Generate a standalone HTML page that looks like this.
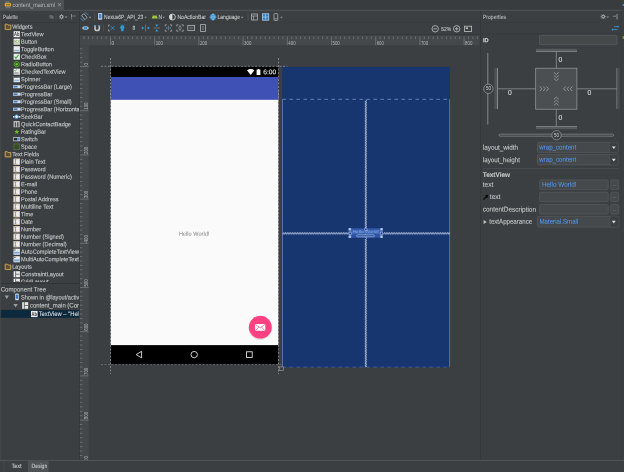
<!DOCTYPE html>
<html><head><meta charset="utf-8"><title>content_main.xml</title>
<style>
html,body{margin:0;padding:0;background:#3c3f41;}
body{width:624px;height:472px;position:relative;overflow:hidden;font-family:"Liberation Sans", sans-serif;color:#bbbbbb;font-size:5.8px;line-height:7.5px;}
.abs{position:absolute;}
.t{position:absolute;left:0;top:0;transform-origin:0 0;white-space:nowrap;-webkit-text-stroke:0.1px;line-height:8px;}
svg{position:absolute;left:0;top:0;overflow:visible;}
svg text{font-family:"Liberation Sans", sans-serif;}
</style></head><body><div id="root" style="position:absolute;left:0;top:0;width:624px;height:472px;will-change:transform;">

<svg width="624" height="472"><rect x="0.00" y="0.00" width="624.00" height="9.80" fill="#393c3e"/></svg>
<svg width="624" height="472"><rect x="0.00" y="0.00" width="63.90" height="10.20" fill="#4e5254"/></svg>
<svg width="624" height="472"><rect x="0.00" y="9.70" width="624.00" height="1.40" fill="#4b4f51"/></svg>
<svg width="624" height="472" viewBox="0 0 624 472">
<path d="M5.4 1.2 h3.4 l1.6 1.6 v5.4 h-5z" fill="#6e7274"/><rect x="4.8" y="3.2" width="6.1" height="3" fill="#eea732"/><rect x="6.2" y="4" width="1.3" height="1.5" fill="#7a5518"/><rect x="8.4" y="4" width="1.3" height="1.5" fill="#7a5518"/>
</svg>
<div class="t" style="transform:translate(12.60px,0.90px) rotate(0.05deg) scaleX(0.8697);font-size:6.21px;line-height:8px;color:#b8babc;-webkit-text-stroke:0;">content_main.xml</div>
<div class="t" style="transform:translate(57.60px,1.00px) rotate(0.05deg) scaleX(1.0000);font-size:6.96px;line-height:8px;color:#9a9da0;">&#215;</div>
<div class="t" style="transform:translate(2.90px,13.00px) rotate(0.05deg) scaleX(0.8094);font-size:5.99px;line-height:8px;color:#b6b8ba;">Palette</div>
<svg width="624" height="472"><rect x="0.00" y="22.20" width="79.50" height="0.60" fill="#323537"/></svg>
<svg width="624" height="472"><rect x="79.20" y="11.00" width="0.80" height="449.00" fill="#323537"/></svg>
<div class="abs" style="left:0;top:22.8px;width:79.2px;height:259.6px;overflow:hidden;">
<div class="t" style="transform:translate(12.2px,-0.30px) rotate(0.05deg) scaleX(0.935);color:#c8cacb;font-size:6.0px;">Widgets</div>
<div class="t" style="transform:translate(21.1px,7.20px) rotate(0.05deg) scaleX(0.935);color:#c8cacb;font-size:6.0px;">TextView</div>
<div class="t" style="transform:translate(21.1px,14.70px) rotate(0.05deg) scaleX(0.935);color:#c8cacb;font-size:6.0px;">Button</div>
<div class="t" style="transform:translate(21.1px,22.20px) rotate(0.05deg) scaleX(0.935);color:#c8cacb;font-size:6.0px;">ToggleButton</div>
<div class="t" style="transform:translate(21.1px,29.70px) rotate(0.05deg) scaleX(0.935);color:#c8cacb;font-size:6.0px;">CheckBox</div>
<div class="t" style="transform:translate(21.1px,37.20px) rotate(0.05deg) scaleX(0.935);color:#c8cacb;font-size:6.0px;">RadioButton</div>
<div class="t" style="transform:translate(21.1px,44.70px) rotate(0.05deg) scaleX(0.935);color:#c8cacb;font-size:6.0px;">CheckedTextView</div>
<div class="t" style="transform:translate(21.1px,52.20px) rotate(0.05deg) scaleX(0.935);color:#c8cacb;font-size:6.0px;">Spinner</div>
<div class="t" style="transform:translate(21.1px,59.70px) rotate(0.05deg) scaleX(0.935);color:#c8cacb;font-size:6.0px;">ProgressBar (Large)</div>
<div class="t" style="transform:translate(21.1px,67.20px) rotate(0.05deg) scaleX(0.935);color:#c8cacb;font-size:6.0px;">ProgressBar</div>
<div class="t" style="transform:translate(21.1px,74.70px) rotate(0.05deg) scaleX(0.935);color:#c8cacb;font-size:6.0px;">ProgressBar (Small)</div>
<div class="t" style="transform:translate(21.1px,82.20px) rotate(0.05deg) scaleX(0.935);color:#c8cacb;font-size:6.0px;">ProgressBar (Horizontal)</div>
<div class="t" style="transform:translate(21.1px,89.70px) rotate(0.05deg) scaleX(0.935);color:#c8cacb;font-size:6.0px;">SeekBar</div>
<div class="t" style="transform:translate(21.1px,97.20px) rotate(0.05deg) scaleX(0.935);color:#c8cacb;font-size:6.0px;">QuickContactBadge</div>
<div class="t" style="transform:translate(21.1px,104.70px) rotate(0.05deg) scaleX(0.935);color:#c8cacb;font-size:6.0px;">RatingBar</div>
<div class="t" style="transform:translate(21.1px,112.20px) rotate(0.05deg) scaleX(0.935);color:#c8cacb;font-size:6.0px;">Switch</div>
<div class="t" style="transform:translate(21.1px,119.70px) rotate(0.05deg) scaleX(0.935);color:#c8cacb;font-size:6.0px;">Space</div>
<div class="t" style="transform:translate(12.2px,127.20px) rotate(0.05deg) scaleX(0.935);color:#c8cacb;font-size:6.0px;">Text Fields</div>
<div class="t" style="transform:translate(21.1px,134.70px) rotate(0.05deg) scaleX(0.935);color:#c8cacb;font-size:6.0px;">Plain Text</div>
<div class="t" style="transform:translate(21.1px,142.20px) rotate(0.05deg) scaleX(0.935);color:#c8cacb;font-size:6.0px;">Password</div>
<div class="t" style="transform:translate(21.1px,149.70px) rotate(0.05deg) scaleX(0.935);color:#c8cacb;font-size:6.0px;">Password (Numeric)</div>
<div class="t" style="transform:translate(21.1px,157.20px) rotate(0.05deg) scaleX(0.935);color:#c8cacb;font-size:6.0px;">E-mail</div>
<div class="t" style="transform:translate(21.1px,164.70px) rotate(0.05deg) scaleX(0.935);color:#c8cacb;font-size:6.0px;">Phone</div>
<div class="t" style="transform:translate(21.1px,172.20px) rotate(0.05deg) scaleX(0.935);color:#c8cacb;font-size:6.0px;">Postal Address</div>
<div class="t" style="transform:translate(21.1px,179.70px) rotate(0.05deg) scaleX(0.935);color:#c8cacb;font-size:6.0px;">Multiline Text</div>
<div class="t" style="transform:translate(21.1px,187.20px) rotate(0.05deg) scaleX(0.935);color:#c8cacb;font-size:6.0px;">Time</div>
<div class="t" style="transform:translate(21.1px,194.70px) rotate(0.05deg) scaleX(0.935);color:#c8cacb;font-size:6.0px;">Date</div>
<div class="t" style="transform:translate(21.1px,202.20px) rotate(0.05deg) scaleX(0.935);color:#c8cacb;font-size:6.0px;">Number</div>
<div class="t" style="transform:translate(21.1px,209.70px) rotate(0.05deg) scaleX(0.935);color:#c8cacb;font-size:6.0px;">Number (Signed)</div>
<div class="t" style="transform:translate(21.1px,217.20px) rotate(0.05deg) scaleX(0.935);color:#c8cacb;font-size:6.0px;">Number (Decimal)</div>
<div class="t" style="transform:translate(21.1px,224.70px) rotate(0.05deg) scaleX(0.935);color:#c8cacb;font-size:6.0px;">AutoCompleteTextView</div>
<div class="t" style="transform:translate(21.1px,232.20px) rotate(0.05deg) scaleX(0.935);color:#c8cacb;font-size:6.0px;">MultiAutoCompleteTextView</div>
<div class="t" style="transform:translate(12.2px,239.70px) rotate(0.05deg) scaleX(0.935);color:#c8cacb;font-size:6.0px;">Layouts</div>
<div class="t" style="transform:translate(21.1px,247.20px) rotate(0.05deg) scaleX(0.935);color:#c8cacb;font-size:6.0px;">ConstraintLayout</div>
<div class="t" style="transform:translate(21.1px,254.70px) rotate(0.05deg) scaleX(0.935);color:#c8cacb;font-size:6.0px;">GridLayout</div>
<svg width="80" height="260" viewBox="0 0 80 260"><path d="M5.2 1.1999999999999993 h2.2 l0.6 0.9 h2.8 v4.3 h-5.6z" fill="#5a4e36" stroke="#cda552" stroke-width="1"/><rect x="13.6" y="8.2" width="6.3" height="6" fill="#ececec"/><text x="14.1" y="13.399999999999999" font-size="4.6" font-weight="bold" fill="#333" textLength="5.3" lengthAdjust="spacingAndGlyphs">Ab</text><rect x="13.6" y="15.7" width="6.3" height="6" fill="#ececec"/><rect x="14.2" y="17.0" width="5.1" height="3.4" fill="#8fb36a"/><text x="14.6" y="19.9" font-size="3" font-weight="bold" fill="#f4f4f4" textLength="4.3" lengthAdjust="spacingAndGlyphs">OK</text><rect x="13.6" y="23.2" width="6.3" height="6" fill="#ececec"/><rect x="14.1" y="26.8" width="5.3" height="1.6" fill="#8fb4dc"/><rect x="13.6" y="30.700000000000003" width="6.3" height="6" fill="#ececec"/><path d="M14.6 33.7 l1.4 1.6 l2.6 -3.6" stroke="#3aa33a" stroke-width="1.1" fill="none"/><circle cx="16.7" cy="41.2" r="2.6" fill="#2e4a22" stroke="#5fb32e" stroke-width="0.9"/><circle cx="16.7" cy="41.2" r="1.3" fill="#6cc43a"/><rect x="13.6" y="45.7" width="6.3" height="6" fill="#ececec"/><path d="M14.2 47.300000000000004 l1 1 l1.6 -2" stroke="#3aa33a" stroke-width="0.8" fill="none"/><rect x="14.2" y="49.5" width="4.4" height="1" fill="#777"/><rect x="13.6" y="53.2" width="6.3" height="6" fill="#ececec"/><rect x="13.6" y="53.1" width="6.4" height="1.6" fill="#3c3f41"/><rect x="14.2" y="56.6" width="5.1" height="1.6" fill="#9bbbe0"/><rect x="18.2" y="53.6" width="1.6" height="1.2" fill="#4a88c7"/><rect x="13.0" y="62.2" width="7.6" height="3" fill="#cfdbe8"/><rect x="13.5" y="62.900000000000006" width="4" height="1.6" fill="#3d7cc4"/><rect x="13.0" y="69.7" width="7.6" height="3" fill="#cfdbe8"/><rect x="13.5" y="70.4" width="4" height="1.6" fill="#3d7cc4"/><rect x="13.0" y="77.2" width="7.6" height="3" fill="#cfdbe8"/><rect x="13.5" y="77.9" width="4" height="1.6" fill="#3d7cc4"/><rect x="13.0" y="84.7" width="7.6" height="3" fill="#cfdbe8"/><rect x="13.5" y="85.4" width="4" height="1.6" fill="#3d7cc4"/><rect x="13.0" y="93.0" width="7.4" height="1.6" fill="#cfdbe8"/><circle cx="16.6" cy="93.7" r="1.9" fill="#e8eef5" stroke="#3d86d0" stroke-width="1"/><rect x="13.6" y="98.2" width="6" height="6" fill="#d8d8d8"/><rect x="14.6" y="99.2" width="1.6" height="4.6" fill="#555"/><rect x="17.0" y="99.2" width="1.6" height="4.6" fill="#555"/><polygon points="16.80,106.20 17.45,108.01 19.37,108.07 17.85,109.24 18.39,111.08 16.80,110.00 15.21,111.08 15.75,109.24 14.23,108.07 16.15,108.01" fill="#6cc030"/><rect x="13.2" y="114.2" width="7" height="4" fill="#d8dde2"/><rect x="13.799999999999999" y="114.9" width="3.6" height="2.6" fill="#2b2b2b"/><rect x="17.4" y="114.9" width="2.4" height="2.6" fill="#4a90d9"/><rect x="13.9" y="120.9" width="5.6" height="5.6" fill="#3a4a2c" stroke="#5f9a2a" stroke-width="0.7" stroke-dasharray="0.8 0.4"/><path d="M5.2 128.7 h2.2 l0.6 0.9 h2.8 v4.3 h-5.6z" fill="#5a4e36" stroke="#cda552" stroke-width="1"/><rect x="13.6" y="135.7" width="6.3" height="6" fill="#ececec"/><rect x="13.9" y="136.0" width="5.7" height="5.4" fill="none" stroke="#dcbf8e" stroke-width="0.6"/><path d="M14.7 136.7 h1.6 M15.5 136.7 v4 M14.7 140.7 h1.6" stroke="#3a7cc4" stroke-width="0.6" fill="none"/><rect x="13.6" y="143.2" width="6.3" height="6" fill="#ececec"/><rect x="13.9" y="143.5" width="5.7" height="5.4" fill="none" stroke="#dcbf8e" stroke-width="0.6"/><path d="M14.7 144.2 h1.6 M15.5 144.2 v4 M14.7 148.2 h1.6" stroke="#3a7cc4" stroke-width="0.6" fill="none"/><rect x="13.6" y="150.7" width="6.3" height="6" fill="#ececec"/><rect x="13.9" y="151.0" width="5.7" height="5.4" fill="none" stroke="#dcbf8e" stroke-width="0.6"/><path d="M14.7 151.7 h1.6 M15.5 151.7 v4 M14.7 155.7 h1.6" stroke="#3a7cc4" stroke-width="0.6" fill="none"/><rect x="13.6" y="158.2" width="6.3" height="6" fill="#ececec"/><rect x="13.9" y="158.5" width="5.7" height="5.4" fill="none" stroke="#dcbf8e" stroke-width="0.6"/><path d="M14.7 159.2 h1.6 M15.5 159.2 v4 M14.7 163.2 h1.6" stroke="#3a7cc4" stroke-width="0.6" fill="none"/><rect x="13.6" y="165.7" width="6.3" height="6" fill="#ececec"/><rect x="13.9" y="166.0" width="5.7" height="5.4" fill="none" stroke="#dcbf8e" stroke-width="0.6"/><path d="M14.7 166.7 h1.6 M15.5 166.7 v4 M14.7 170.7 h1.6" stroke="#3a7cc4" stroke-width="0.6" fill="none"/><rect x="13.6" y="173.2" width="6.3" height="6" fill="#ececec"/><rect x="13.9" y="173.5" width="5.7" height="5.4" fill="none" stroke="#dcbf8e" stroke-width="0.6"/><path d="M14.7 174.2 h1.6 M15.5 174.2 v4 M14.7 178.2 h1.6" stroke="#3a7cc4" stroke-width="0.6" fill="none"/><rect x="13.6" y="180.7" width="6.3" height="6" fill="#ececec"/><rect x="13.9" y="181.0" width="5.7" height="5.4" fill="none" stroke="#dcbf8e" stroke-width="0.6"/><path d="M14.7 181.7 h1.6 M15.5 181.7 v4 M14.7 185.7 h1.6" stroke="#3a7cc4" stroke-width="0.6" fill="none"/><rect x="13.6" y="188.2" width="6.3" height="6" fill="#ececec"/><rect x="13.9" y="188.5" width="5.7" height="5.4" fill="none" stroke="#dcbf8e" stroke-width="0.6"/><path d="M14.7 189.2 h1.6 M15.5 189.2 v4 M14.7 193.2 h1.6" stroke="#3a7cc4" stroke-width="0.6" fill="none"/><rect x="13.6" y="195.7" width="6.3" height="6" fill="#ececec"/><rect x="13.9" y="196.0" width="5.7" height="5.4" fill="none" stroke="#dcbf8e" stroke-width="0.6"/><path d="M14.7 196.7 h1.6 M15.5 196.7 v4 M14.7 200.7 h1.6" stroke="#3a7cc4" stroke-width="0.6" fill="none"/><rect x="13.6" y="203.2" width="6.3" height="6" fill="#ececec"/><rect x="13.9" y="203.5" width="5.7" height="5.4" fill="none" stroke="#dcbf8e" stroke-width="0.6"/><path d="M14.7 204.2 h1.6 M15.5 204.2 v4 M14.7 208.2 h1.6" stroke="#3a7cc4" stroke-width="0.6" fill="none"/><rect x="13.6" y="210.7" width="6.3" height="6" fill="#ececec"/><rect x="13.9" y="211.0" width="5.7" height="5.4" fill="none" stroke="#dcbf8e" stroke-width="0.6"/><path d="M14.7 211.7 h1.6 M15.5 211.7 v4 M14.7 215.7 h1.6" stroke="#3a7cc4" stroke-width="0.6" fill="none"/><rect x="13.6" y="218.2" width="6.3" height="6" fill="#ececec"/><rect x="13.9" y="218.5" width="5.7" height="5.4" fill="none" stroke="#dcbf8e" stroke-width="0.6"/><path d="M14.7 219.2 h1.6 M15.5 219.2 v4 M14.7 223.2 h1.6" stroke="#3a7cc4" stroke-width="0.6" fill="none"/><rect x="13.6" y="225.7" width="6.3" height="6" fill="#ececec"/><rect x="13.6" y="228.5" width="6.3" height="3.2" fill="#aac8e8"/><rect x="14.2" y="226.29999999999998" width="1.4" height="1.2" fill="#555"/><rect x="14.2" y="229.29999999999998" width="5" height="0.7" fill="#6b94c4"/><rect x="13.6" y="233.2" width="6.3" height="6" fill="#ececec"/><rect x="13.6" y="236.0" width="6.3" height="3.2" fill="#aac8e8"/><rect x="14.2" y="233.79999999999998" width="1.4" height="1.2" fill="#555"/><rect x="14.2" y="236.79999999999998" width="5" height="0.7" fill="#6b94c4"/><path d="M5.2 241.2 h2.2 l0.6 0.9 h2.8 v4.3 h-5.6z" fill="#5a4e36" stroke="#cda552" stroke-width="1"/><rect x="13.6" y="248.2" width="6.3" height="6" fill="#ececec"/><path d="M15.6 248.2 v6 M15.6 251.2 h3.8" stroke="#444" stroke-width="0.7" fill="none"/><rect x="13.6" y="255.7" width="6.3" height="6" fill="#ececec"/><path d="M15.6 255.7 v6 M15.6 258.7 h3.8" stroke="#444" stroke-width="0.7" fill="none"/></svg>
</div>
<svg width="624" height="472"><rect x="0.00" y="283.20" width="79.20" height="0.70" fill="#2f3234"/></svg>
<div class="t" style="transform:translate(0.70px,285.50px) rotate(0.05deg) scaleX(0.9358);font-size:6.53px;line-height:8px;color:#c4c6c7;">Component Tree</div>
<svg width="624" height="472"><rect x="0.00" y="309.90" width="79.20" height="7.90" fill="#0d293e"/></svg>
<div class="abs" style="left:0;top:284px;width:79.2px;height:40px;overflow:hidden;">
<div class="t" style="transform:translate(20.9px,9.50px) rotate(0.05deg) scaleX(0.8631);font-size:6.5px;color:#c8cacb;">Shown in @layout/activity_main</div>
<div class="t" style="transform:translate(29.9px,17.50px) rotate(0.05deg) scaleX(0.9177);font-size:6.5px;color:#c8cacb;">content_main (ConstraintLayout)</div>
<div class="t" style="transform:translate(38.7px,25.90px) rotate(0.05deg) scaleX(0.8898);font-size:6.5px;color:#dcdedf;">TextView &#8211; "Hello World!"</div>
</div>
<svg width="624" height="472" viewBox="0 0 624 472">
<path d="M4.6 295.6 h4.4 l-2.2 3.4z" fill="#9da0a2"/>
<path d="M13.4 303.9 h4.4 l-2.2 3.4z" fill="#9da0a2"/>
<rect x="15.2" y="293.6" width="3.6" height="6.6" rx="0.6" fill="#cfd6dd"/><rect x="15.9" y="294.6" width="2.2" height="4.2" fill="#3d7cc4"/>
<rect x="22.2" y="302.2" width="6" height="6.6" fill="#e6e6e6"/><path d="M24.4 302.2 v6.6 M24.4 305.5 h3.8" stroke="#444" stroke-width="0.7"/>
<rect x="31" y="310.9" width="6.6" height="6.2" fill="#ececec"/><text x="31.6" y="316.2" font-size="4.7" font-weight="bold" fill="#333" textLength="5.4" lengthAdjust="spacingAndGlyphs">Ab</text>
</svg>
<svg width="624" height="472"><rect x="80.00" y="22.20" width="400.50" height="0.50" fill="#37393b"/></svg>
<svg width="624" height="472"><rect x="80.00" y="34.30" width="400.50" height="0.60" fill="#323537"/></svg>
<div class="t" style="transform:translate(104.10px,13.00px) rotate(0.05deg) scaleX(0.8287);font-size:5.99px;line-height:8px;color:#c4c6c7;">Nexus6P_API_23</div>
<div class="t" style="transform:translate(158.60px,13.00px) rotate(0.05deg) scaleX(0.8318);font-size:5.99px;line-height:8px;color:#c4c6c7;">N</div>
<div class="t" style="transform:translate(177.40px,13.00px) rotate(0.05deg) scaleX(0.8502);font-size:5.99px;line-height:8px;color:#c4c6c7;">NoActionBar</div>
<div class="t" style="transform:translate(217.50px,13.00px) rotate(0.05deg) scaleX(0.8439);font-size:5.99px;line-height:8px;color:#c4c6c7;">Language</div>
<div class="t" style="transform:translate(132.40px,24.00px) rotate(0.05deg) scaleX(0.8318);font-size:5.99px;line-height:8px;color:#c4c6c7;">8</div>
<div class="t" style="transform:translate(441.20px,24.90px) rotate(0.05deg) scaleX(0.8647);font-size:5.78px;line-height:8px;color:#c4c6c7;">52%</div>
<svg width="624" height="472" viewBox="0 0 624 472">
<rect x="49.3" y="14.9" width="3.4" height="2.8" fill="#5d6062"/><rect x="50.3" y="15.9" width="3.4" height="2.8" fill="#66696b"/>
<path d="M56 13.8 V19.8" stroke="#55585a" stroke-width="0.6"/>
<circle cx="61.5" cy="16.8" r="1.4000000000000001" fill="none" stroke="#a3a6a8" stroke-width="1.1"/>
<path d="M63.20 16.80 L64.10 16.80 M62.70 18.00 L63.34 18.64 M61.50 18.50 L61.50 19.40 M60.30 18.00 L59.66 18.64 M59.80 16.80 L58.90 16.80 M60.30 15.60 L59.66 14.96 M61.50 15.10 L61.50 14.20 M62.70 15.60 L63.34 14.96" stroke="#a3a6a8" stroke-width="0.8"/>
<path d="M64.9 16.599999999999998 h2.6 l-1.3 1.6z" fill="#8c8f91"/>
<path d="M71.6 14 V17.6 M71.6 18.3 V19.2" stroke="#a3a6a8" stroke-width="0.8"/><path d="M72.6 16 h3.2" stroke="#8a8d8f" stroke-width="0.7"/>
<circle cx="603.2" cy="16.6" r="1.4000000000000001" fill="none" stroke="#a3a6a8" stroke-width="1.1"/>
<path d="M604.90 16.60 L605.80 16.60 M604.40 17.80 L605.04 18.44 M603.20 18.30 L603.20 19.20 M602.00 17.80 L601.36 18.44 M601.50 16.60 L600.60 16.60 M602.00 15.40 L601.36 14.76 M603.20 14.90 L603.20 14.00 M604.40 15.40 L605.04 14.76" stroke="#a3a6a8" stroke-width="0.8"/>
<path d="M606.5 16.4 h2.6 l-1.3 1.6z" fill="#8c8f91"/>
<path d="M617 14 V19.4" stroke="#a3a6a8" stroke-width="0.8"/><path d="M612.8 16.2 h3.4" stroke="#a3a6a8" stroke-width="0.7"/>
<path d="M612.4 29.6 h5 M614 26.6 h4.2" stroke="#3592c4" stroke-width="0.9"/><path d="M617.6 25.2 l1.6 1.4 l-1.6 1.4z M613 28.2 l-1.6 1.4 l1.6 1.4z" fill="#3592c4"/>
<g transform="rotate(-38 84.4 16.6)"><rect x="82.8" y="14" width="3.2" height="5.2" rx="0.6" fill="none" stroke="#aeb1b3" stroke-width="0.75"/></g><path d="M84.6 12.6 a4 4 0 0 1 3.6 2.6 M84.2 20.6 a4 4 0 0 1 -3.6 -2.6" stroke="#3592c4" stroke-width="0.8" fill="none"/>
<path d="M88.7 16.799999999999997 h2.6 l-1.3 1.6z" fill="#8c8f91"/>
<path d="M94.4 13.4 V20.8" stroke="#55585a" stroke-width="0.6"/>
<rect x="98" y="13" width="4.2" height="6.8" rx="0.7" fill="#bdd3ea"/><rect x="98.8" y="14" width="2.6" height="4.4" fill="#4f86c6"/>
<path d="M144.29999999999998 16.799999999999997 h2.6 l-1.3 1.6z" fill="#8c8f91"/>
<path d="M151.8 18.4 a2.9 2.9 0 0 1 5.8 0z" fill="#9bc53d"/><path d="M152.6 14.6 l0.9 1.3 M156.8 14.6 l-0.9 1.3" stroke="#9bc53d" stroke-width="0.6"/>
<path d="M162.29999999999998 16.799999999999997 h2.6 l-1.3 1.6z" fill="#8c8f91"/>
<circle cx="172.4" cy="17" r="3" fill="none" stroke="#d8dadb" stroke-width="0.8"/><path d="M172.4 14 a3 3 0 0 0 0 6z" fill="#d8dadb"/>
<circle cx="213" cy="17" r="3.3" fill="#2b83c4"/><path d="M209.7 17 h6.6 M213 13.7 v6.6 M213 13.7 a4.6 4.6 0 0 0 0 6.6 M213 13.7 a4.6 4.6 0 0 1 0 6.6" stroke="#a8d4f0" stroke-width="0.5" fill="none"/>
<path d="M240.89999999999998 16.799999999999997 h2.6 l-1.3 1.6z" fill="#8c8f91"/>
<path d="M248 13.4 V20.8" stroke="#55585a" stroke-width="0.6"/>
<rect x="251.6" y="14" width="5.8" height="6" fill="none" stroke="#aeb1b3" stroke-width="0.8"/><path d="M251.6 16 h5.8 M253.6 16 v4" stroke="#aeb1b3" stroke-width="0.7"/>
<rect x="262.4" y="13.8" width="6.4" height="6.4" fill="#2f7fc0" stroke="#bcd8ee" stroke-width="0.7"/><path d="M262.4 17 h6.4 M265.6 13.8 v6.4" stroke="#bcd8ee" stroke-width="0.6"/>
<rect x="274" y="13.6" width="3.8" height="6.8" rx="0.7" fill="none" stroke="#aeb1b3" stroke-width="0.8"/><path d="M274 18.8 h3.8" stroke="#aeb1b3" stroke-width="0.6"/>
<path d="M280.09999999999997 16.799999999999997 h2.6 l-1.3 1.6z" fill="#8c8f91"/>
<path d="M81.8 28 q3.7 -4.2 7.4 0 q-3.7 4.2 -7.4 0z" fill="#c4c7c9"/><ellipse cx="85.5" cy="28" rx="1.9" ry="1.4" fill="#2f8fd0"/>
<path d="M95 25 v3.4 a2.15 2.15 0 0 0 4.3 0 v-3.4" fill="none" stroke="#c4c7c9" stroke-width="1.6"/><path d="M94.2 25.6 h1.6 M98.5 25.6 h1.6" stroke="#2f8fd0" stroke-width="1.4"/>
<path d="M103.4 24.4 V31.6" stroke="#55585a" stroke-width="0.6"/>
<path d="M110 25 h-1.6 v1.7 M108.4 29.3 v1.7 h1.6" fill="none" stroke="#aeb1b3" stroke-width="0.7"/><path d="M110.8 26.2 l3.6 3.6 M114.4 26.2 l-3.6 3.6" stroke="#2f9ad8" stroke-width="0.9"/>
<path d="M120.2 27.4 a2.1 2.1 0 1 1 4.2 0 q0 1.2 -0.9 2 v1.8 h-2.4 v-1.8 q-0.9 -0.8 -0.9 -2z" fill="#2f9ad8"/><path d="M122.3 24 v0.8 M120.2 24.6 l0.5 0.6 M124.4 24.6 l-0.5 0.6" stroke="#2f9ad8" stroke-width="0.5"/>
<path d="M145.5 24.6 v6.8" stroke="#9a9d9f" stroke-width="0.5"/><path d="M141.8 26.5 l2.6 1.5 l-2.6 1.5z M149.2 26.5 l-2.6 1.5 l2.6 1.5z" fill="#2f9ad8"/>
<path d="M153.4 28 h6.8" stroke="#9a9d9f" stroke-width="0.5"/><path d="M155.3 24.4 l1.5 2.6 l1.5 -2.6z M155.3 31.6 l1.5 -2.6 l1.5 2.6z" fill="#2f9ad8"/>
<path d="M165.2 26.400000000000002 v-1.6 h1.6 M170.0 24.8 h1.6 v1.6 M171.6 29.6 v1.6 h-1.6 M166.79999999999998 31.200000000000003 h-1.6 v-1.6" stroke="#b4b7b9" stroke-width="0.7" fill="none"/>
<path d="M168.4 25.8 v4.4" stroke="#b4b7b9" stroke-width="0.5"/><path d="M166 26.9 l1.7 1.1 l-1.7 1.1z M170.8 26.9 l-1.7 1.1 l1.7 1.1z" fill="#2f9ad8"/>
<path d="M176.8 26.400000000000002 v-1.6 h1.6 M181.60000000000002 24.8 h1.6 v1.6 M183.20000000000002 29.6 v1.6 h-1.6 M178.4 31.200000000000003 h-1.6 v-1.6" stroke="#b4b7b9" stroke-width="0.7" fill="none"/>
<path d="M177.9 28 h4.2" stroke="#b4b7b9" stroke-width="0.5"/><path d="M178.9 25.7 l1.1 1.6 l1.1 -1.6z M178.9 30.3 l1.1 -1.6 l1.1 1.6z" fill="#b4b7b9"/>
<rect x="187.8" y="25.5" width="6.8" height="5" fill="none" stroke="#b4b7b9" stroke-width="0.8"/><path d="M189.2 28 h4" stroke="#b4b7b9" stroke-width="0.6"/>
<rect x="200.6" y="24.6" width="4.8" height="6.8" fill="none" stroke="#b4b7b9" stroke-width="0.8"/><path d="M203 26 v4" stroke="#b4b7b9" stroke-width="0.6"/>
<circle cx="435.2" cy="28.8" r="3.2" fill="none" stroke="#c0c2c4" stroke-width="0.8"/><path d="M433.5 28.8 h3.4" stroke="#c0c2c4" stroke-width="0.8"/>
<circle cx="456.7" cy="28.8" r="3.2" fill="none" stroke="#c0c2c4" stroke-width="0.8"/><path d="M455 28.8 h3.4 M456.7 27.1 v3.4" stroke="#c0c2c4" stroke-width="0.8"/>
<rect x="464.4" y="26.2" width="7.2" height="5.2" fill="none" stroke="#c0c2c4" stroke-width="0.8"/><rect x="465.8" y="27.4" width="2.2" height="1.6" fill="#c0c2c4"/>
</svg>
<svg width="624" height="472"><rect x="80.00" y="35.50" width="399.60" height="9.70" fill="#45484a"/></svg>
<svg width="624" height="472"><rect x="80.00" y="45.30" width="8.60" height="414.50" fill="#45484a"/></svg>
<svg width="624" height="472" viewBox="0 0 624 472">
<path d="M83.98 36.5 V39.2 M88.40 36.5 V39.2 M92.82 36.5 V39.2 M97.24 36.5 V39.2 M101.66 36.5 V39.2 M106.08 36.5 V39.2 M110.50 36.5 V45.3 M114.92 36.5 V39.2 M119.34 36.5 V39.2 M123.76 36.5 V39.2 M128.18 36.5 V39.2 M132.60 36.5 V39.2 M137.02 36.5 V39.2 M141.44 36.5 V39.2 M145.86 36.5 V39.2 M150.28 36.5 V39.2 M154.70 36.5 V45.3 M159.12 36.5 V39.2 M163.54 36.5 V39.2 M167.96 36.5 V39.2 M172.38 36.5 V39.2 M176.80 36.5 V39.2 M181.22 36.5 V39.2 M185.64 36.5 V39.2 M190.06 36.5 V39.2 M194.48 36.5 V39.2 M198.90 36.5 V45.3 M203.32 36.5 V39.2 M207.74 36.5 V39.2 M212.16 36.5 V39.2 M216.58 36.5 V39.2 M221.00 36.5 V39.2 M225.42 36.5 V39.2 M229.84 36.5 V39.2 M234.26 36.5 V39.2 M238.68 36.5 V39.2 M243.10 36.5 V45.3 M247.52 36.5 V39.2 M251.94 36.5 V39.2 M256.36 36.5 V39.2 M260.78 36.5 V39.2 M265.20 36.5 V39.2 M269.62 36.5 V39.2 M274.04 36.5 V39.2 M278.46 36.5 V39.2 M282.88 36.5 V39.2 M287.30 36.5 V45.3 M291.72 36.5 V39.2 M296.14 36.5 V39.2 M300.56 36.5 V39.2 M304.98 36.5 V39.2 M309.40 36.5 V39.2 M313.82 36.5 V39.2 M318.24 36.5 V39.2 M322.66 36.5 V39.2 M327.08 36.5 V39.2 M331.50 36.5 V45.3 M335.92 36.5 V39.2 M340.34 36.5 V39.2 M344.76 36.5 V39.2 M349.18 36.5 V39.2 M353.60 36.5 V39.2 M358.02 36.5 V39.2 M362.44 36.5 V39.2 M366.86 36.5 V39.2 M371.28 36.5 V39.2 M375.70 36.5 V45.3 M380.12 36.5 V39.2 M384.54 36.5 V39.2 M388.96 36.5 V39.2 M393.38 36.5 V39.2 M397.80 36.5 V39.2 M402.22 36.5 V39.2 M406.64 36.5 V39.2 M411.06 36.5 V39.2 M415.48 36.5 V39.2 M419.90 36.5 V45.3 M424.32 36.5 V39.2 M428.74 36.5 V39.2 M433.16 36.5 V39.2 M437.58 36.5 V39.2 M442.00 36.5 V39.2 M446.42 36.5 V39.2 M450.84 36.5 V39.2 M455.26 36.5 V39.2 M459.68 36.5 V39.2 M464.10 36.5 V45.3 M468.52 36.5 V39.2 M472.94 36.5 V39.2 M477.36 36.5 V39.2" stroke="#85888a" stroke-width="0.6" fill="none"/>
<text x="111.50" y="44.7" font-size="4.9" fill="#b4b7b9">0</text>
<text x="155.70" y="44.7" font-size="4.9" fill="#b4b7b9" textLength="7.3" lengthAdjust="spacingAndGlyphs">100</text>
<text x="199.90" y="44.7" font-size="4.9" fill="#b4b7b9" textLength="7.3" lengthAdjust="spacingAndGlyphs">200</text>
<text x="244.10" y="44.7" font-size="4.9" fill="#b4b7b9" textLength="7.3" lengthAdjust="spacingAndGlyphs">300</text>
<text x="288.30" y="44.7" font-size="4.9" fill="#b4b7b9" textLength="7.3" lengthAdjust="spacingAndGlyphs">400</text>
<text x="332.50" y="44.7" font-size="4.9" fill="#b4b7b9" textLength="7.3" lengthAdjust="spacingAndGlyphs">500</text>
<text x="376.70" y="44.7" font-size="4.9" fill="#b4b7b9" textLength="7.3" lengthAdjust="spacingAndGlyphs">600</text>
<text x="420.90" y="44.7" font-size="4.9" fill="#b4b7b9" textLength="7.3" lengthAdjust="spacingAndGlyphs">700</text>
<text x="465.10" y="44.7" font-size="4.9" fill="#b4b7b9" textLength="7.3" lengthAdjust="spacingAndGlyphs">800</text>
<path d="M79.8 48.82 H82.4 M79.8 53.24 H82.4 M79.8 57.66 H82.4 M79.8 62.08 H82.4 M80 66.50 H88.6 M79.8 70.92 H82.4 M79.8 75.34 H82.4 M79.8 79.76 H82.4 M79.8 84.18 H82.4 M79.8 88.60 H82.4 M79.8 93.02 H82.4 M79.8 97.44 H82.4 M79.8 101.86 H82.4 M79.8 106.28 H82.4 M80 110.70 H88.6 M79.8 115.12 H82.4 M79.8 119.54 H82.4 M79.8 123.96 H82.4 M79.8 128.38 H82.4 M79.8 132.80 H82.4 M79.8 137.22 H82.4 M79.8 141.64 H82.4 M79.8 146.06 H82.4 M79.8 150.48 H82.4 M80 154.90 H88.6 M79.8 159.32 H82.4 M79.8 163.74 H82.4 M79.8 168.16 H82.4 M79.8 172.58 H82.4 M79.8 177.00 H82.4 M79.8 181.42 H82.4 M79.8 185.84 H82.4 M79.8 190.26 H82.4 M79.8 194.68 H82.4 M80 199.10 H88.6 M79.8 203.52 H82.4 M79.8 207.94 H82.4 M79.8 212.36 H82.4 M79.8 216.78 H82.4 M79.8 221.20 H82.4 M79.8 225.62 H82.4 M79.8 230.04 H82.4 M79.8 234.46 H82.4 M79.8 238.88 H82.4 M80 243.30 H88.6 M79.8 247.72 H82.4 M79.8 252.14 H82.4 M79.8 256.56 H82.4 M79.8 260.98 H82.4 M79.8 265.40 H82.4 M79.8 269.82 H82.4 M79.8 274.24 H82.4 M79.8 278.66 H82.4 M79.8 283.08 H82.4 M80 287.50 H88.6 M79.8 291.92 H82.4 M79.8 296.34 H82.4 M79.8 300.76 H82.4 M79.8 305.18 H82.4 M79.8 309.60 H82.4 M79.8 314.02 H82.4 M79.8 318.44 H82.4 M79.8 322.86 H82.4 M79.8 327.28 H82.4 M80 331.70 H88.6 M79.8 336.12 H82.4 M79.8 340.54 H82.4 M79.8 344.96 H82.4 M79.8 349.38 H82.4 M79.8 353.80 H82.4 M79.8 358.22 H82.4 M79.8 362.64 H82.4 M79.8 367.06 H82.4 M79.8 371.48 H82.4 M80 375.90 H88.6 M79.8 380.32 H82.4 M79.8 384.74 H82.4 M79.8 389.16 H82.4 M79.8 393.58 H82.4 M79.8 398.00 H82.4 M79.8 402.42 H82.4 M79.8 406.84 H82.4 M79.8 411.26 H82.4 M79.8 415.68 H82.4 M80 420.10 H88.6 M79.8 424.52 H82.4 M79.8 428.94 H82.4 M79.8 433.36 H82.4 M79.8 437.78 H82.4 M79.8 442.20 H82.4 M79.8 446.62 H82.4 M79.8 451.04 H82.4 M79.8 455.46 H82.4" stroke="#85888a" stroke-width="0.6" fill="none"/>
<text transform="translate(88.1 65.60) rotate(-90)" font-size="4.9" fill="#b4b7b9">0</text>
<text transform="translate(88.1 109.80) rotate(-90)" font-size="4.9" fill="#b4b7b9" textLength="7.3" lengthAdjust="spacingAndGlyphs">100</text>
<text transform="translate(88.1 154.00) rotate(-90)" font-size="4.9" fill="#b4b7b9" textLength="7.3" lengthAdjust="spacingAndGlyphs">200</text>
<text transform="translate(88.1 198.20) rotate(-90)" font-size="4.9" fill="#b4b7b9" textLength="7.3" lengthAdjust="spacingAndGlyphs">300</text>
<text transform="translate(88.1 242.40) rotate(-90)" font-size="4.9" fill="#b4b7b9" textLength="7.3" lengthAdjust="spacingAndGlyphs">400</text>
<text transform="translate(88.1 286.60) rotate(-90)" font-size="4.9" fill="#b4b7b9" textLength="7.3" lengthAdjust="spacingAndGlyphs">500</text>
<text transform="translate(88.1 330.80) rotate(-90)" font-size="4.9" fill="#b4b7b9" textLength="7.3" lengthAdjust="spacingAndGlyphs">600</text>
<text transform="translate(88.1 375.00) rotate(-90)" font-size="4.9" fill="#b4b7b9" textLength="7.3" lengthAdjust="spacingAndGlyphs">700</text>
<text transform="translate(88.1 419.20) rotate(-90)" font-size="4.9" fill="#b4b7b9" textLength="7.3" lengthAdjust="spacingAndGlyphs">800</text>
<text transform="translate(88.1 463.40) rotate(-90)" font-size="4.9" fill="#b4b7b9" textLength="7.3" lengthAdjust="spacingAndGlyphs">900</text>
</svg>
<svg width="624" height="472"><rect x="110.80" y="66.60" width="167.50" height="297.70" fill="#000"/></svg>
<svg width="624" height="472"><rect x="110.80" y="90.00" width="167.50" height="255.10" fill="#fafafa"/></svg>
<svg width="624" height="472"><rect x="110.80" y="77.00" width="167.50" height="22.80" fill="#3f51b5"/></svg>
<div class="t" style="transform:translate(178.90px,229.80px) rotate(0.05deg) scaleX(0.9725);font-size:5.78px;line-height:8px;color:#7c7c7c;-webkit-text-stroke:0;">Hello World!</div>
<div class="t" style="transform:translate(263.20px,68.20px) rotate(0.05deg) scaleX(0.9908);font-size:6.74px;line-height:8px;color:#ececec;">6:00</div>
<svg width="624" height="472"><rect x="282.20" y="66.80" width="167.80" height="300.50" fill="#17366f"/></svg>
<svg width="624" height="472" viewBox="0 0 624 472">
<circle cx="260.3" cy="328.2" r="11.8" fill="#000" opacity="0.10"/>
<circle cx="260.3" cy="327.2" r="11.4" fill="#ff4081"/>
<rect x="255.1" y="324.0" width="10.2" height="6.8" rx="0.7" fill="#fff"/><path d="M255.4 324.4 l4.8 3.4 l4.8 -3.4 M255.5 330.5 l3.3 -3.4 M264.9 330.5 l-3.3 -3.4" stroke="#ff4081" stroke-width="0.7" fill="none"/>
<path d="M141.6 351.3 v6.6 l-5.4 -3.3z" fill="none" stroke="#fff" stroke-width="0.8"/>
<circle cx="194.2" cy="354.6" r="3.2" fill="none" stroke="#fff" stroke-width="0.8"/>
<rect x="246.6" y="351.8" width="5.6" height="5.6" fill="none" stroke="#fff" stroke-width="0.8"/>
<path d="M247 70.2 q3.7 -2.6 7.4 0 l-3.7 4.8z" fill="#fff"/>
<rect x="256.6" y="69.6" width="3.8" height="5.4" fill="#fff"/><rect x="257.7" y="68.9" width="1.6" height="1" fill="#fff"/>
<g stroke="#b4b6b8" stroke-width="0.55" stroke-dasharray="2 1.5" fill="none">
<path d="M101 66.3 H287.4 M110.5 58 V374 M278.5 58 V374"/><path d="M101 364.6 H282" stroke="#8e9092"/>
</g>
<path d="M282.4 99.3 H450" stroke="#7f9bd0" stroke-width="0.7" stroke-dasharray="3.6 3.4"/>
<path d="M282.5 99.3 V367.3" stroke="#6c8cc8" stroke-width="0.7"/>
<path d="M449.6 99.3 V367.3" stroke="#6c8cc8" stroke-width="0.7"/>
<path d="M282.4 367.1 H450" stroke="#5877b4" stroke-width="0.6" stroke-dasharray="3.6 3.4"/>
<rect x="279.2" y="366.9" width="4.2" height="3.4" fill="#3c3f41" stroke="#a6a8aa" stroke-width="0.6"/>
<path d="M365.8 99.8 L366.75 100.65 L364.85 101.50 L366.75 102.35 L364.85 103.20 L366.75 104.05 L364.85 104.90 L366.75 105.75 L364.85 106.60 L366.75 107.45 L364.85 108.30 L366.75 109.15 L364.85 110.00 L366.75 110.85 L364.85 111.70 L366.75 112.55 L364.85 113.40 L366.75 114.25 L364.85 115.10 L366.75 115.95 L364.85 116.80 L366.75 117.65 L364.85 118.50 L366.75 119.35 L364.85 120.20 L366.75 121.05 L364.85 121.90 L366.75 122.75 L364.85 123.60 L366.75 124.45 L364.85 125.30 L366.75 126.15 L364.85 127.00 L366.75 127.85 L364.85 128.70 L366.75 129.55 L364.85 130.40 L366.75 131.25 L364.85 132.10 L366.75 132.95 L364.85 133.80 L366.75 134.65 L364.85 135.50 L366.75 136.35 L364.85 137.20 L366.75 138.05 L364.85 138.90 L366.75 139.75 L364.85 140.60 L366.75 141.45 L364.85 142.30 L366.75 143.15 L364.85 144.00 L366.75 144.85 L364.85 145.70 L366.75 146.55 L364.85 147.40 L366.75 148.25 L364.85 149.10 L366.75 149.95 L364.85 150.80 L366.75 151.65 L364.85 152.50 L366.75 153.35 L364.85 154.20 L366.75 155.05 L364.85 155.90 L366.75 156.75 L364.85 157.60 L366.75 158.45 L364.85 159.30 L366.75 160.15 L364.85 161.00 L366.75 161.85 L364.85 162.70 L366.75 163.55 L364.85 164.40 L366.75 165.25 L364.85 166.10 L366.75 166.95 L364.85 167.80 L366.75 168.65 L364.85 169.50 L366.75 170.35 L364.85 171.20 L366.75 172.05 L364.85 172.90 L366.75 173.75 L364.85 174.60 L366.75 175.45 L364.85 176.30 L366.75 177.15 L364.85 178.00 L366.75 178.85 L364.85 179.70 L366.75 180.55 L364.85 181.40 L366.75 182.25 L364.85 183.10 L366.75 183.95 L364.85 184.80 L366.75 185.65 L364.85 186.50 L366.75 187.35 L364.85 188.20 L366.75 189.05 L364.85 189.90 L366.75 190.75 L364.85 191.60 L366.75 192.45 L364.85 193.30 L366.75 194.15 L364.85 195.00 L366.75 195.85 L364.85 196.70 L366.75 197.55 L364.85 198.40 L366.75 199.25 L364.85 200.10 L366.75 200.95 L364.85 201.80 L366.75 202.65 L364.85 203.50 L366.75 204.35 L364.85 205.20 L366.75 206.05 L364.85 206.90 L366.75 207.75 L364.85 208.60 L366.75 209.45 L364.85 210.30 L366.75 211.15 L364.85 212.00 L366.75 212.85 L364.85 213.70 L366.75 214.55 L364.85 215.40 L366.75 216.25 L364.85 217.10 L366.75 217.95 L364.85 218.80 L366.75 219.65 L364.85 220.50 L366.75 221.35 L364.85 222.20 L366.75 223.05 L364.85 223.90 L366.75 224.75 L364.85 225.60 L366.75 226.45 L364.85 227.30 L366.75 228.15 L364.85 228.20 M365.8 238 L366.75 238.85 L364.85 239.70 L366.75 240.55 L364.85 241.40 L366.75 242.25 L364.85 243.10 L366.75 243.95 L364.85 244.80 L366.75 245.65 L364.85 246.50 L366.75 247.35 L364.85 248.20 L366.75 249.05 L364.85 249.90 L366.75 250.75 L364.85 251.60 L366.75 252.45 L364.85 253.30 L366.75 254.15 L364.85 255.00 L366.75 255.85 L364.85 256.70 L366.75 257.55 L364.85 258.40 L366.75 259.25 L364.85 260.10 L366.75 260.95 L364.85 261.80 L366.75 262.65 L364.85 263.50 L366.75 264.35 L364.85 265.20 L366.75 266.05 L364.85 266.90 L366.75 267.75 L364.85 268.60 L366.75 269.45 L364.85 270.30 L366.75 271.15 L364.85 272.00 L366.75 272.85 L364.85 273.70 L366.75 274.55 L364.85 275.40 L366.75 276.25 L364.85 277.10 L366.75 277.95 L364.85 278.80 L366.75 279.65 L364.85 280.50 L366.75 281.35 L364.85 282.20 L366.75 283.05 L364.85 283.90 L366.75 284.75 L364.85 285.60 L366.75 286.45 L364.85 287.30 L366.75 288.15 L364.85 289.00 L366.75 289.85 L364.85 290.70 L366.75 291.55 L364.85 292.40 L366.75 293.25 L364.85 294.10 L366.75 294.95 L364.85 295.80 L366.75 296.65 L364.85 297.50 L366.75 298.35 L364.85 299.20 L366.75 300.05 L364.85 300.90 L366.75 301.75 L364.85 302.60 L366.75 303.45 L364.85 304.30 L366.75 305.15 L364.85 306.00 L366.75 306.85 L364.85 307.70 L366.75 308.55 L364.85 309.40 L366.75 310.25 L364.85 311.10 L366.75 311.95 L364.85 312.80 L366.75 313.65 L364.85 314.50 L366.75 315.35 L364.85 316.20 L366.75 317.05 L364.85 317.90 L366.75 318.75 L364.85 319.60 L366.75 320.45 L364.85 321.30 L366.75 322.15 L364.85 323.00 L366.75 323.85 L364.85 324.70 L366.75 325.55 L364.85 326.40 L366.75 327.25 L364.85 328.10 L366.75 328.95 L364.85 329.80 L366.75 330.65 L364.85 331.50 L366.75 332.35 L364.85 333.20 L366.75 334.05 L364.85 334.90 L366.75 335.75 L364.85 336.60 L366.75 337.45 L364.85 338.30 L366.75 339.15 L364.85 340.00 L366.75 340.85 L364.85 341.70 L366.75 342.55 L364.85 343.40 L366.75 344.25 L364.85 345.10 L366.75 345.95 L364.85 346.80 L366.75 347.65 L364.85 348.50 L366.75 349.35 L364.85 350.20 L366.75 351.05 L364.85 351.90 L366.75 352.75 L364.85 353.60 L366.75 354.45 L364.85 355.30 L366.75 356.15 L364.85 357.00 L366.75 357.85 L364.85 358.70 L366.75 359.55 L364.85 360.40 L366.75 361.25 L364.85 362.10 L366.75 362.95 L364.85 363.80 L366.75 364.65 L364.85 365.50 L366.75 366.35 L364.85 367.00 M282.2 233.4 L283.05 234.35 L283.90 232.45 L284.75 234.35 L285.60 232.45 L286.45 234.35 L287.30 232.45 L288.15 234.35 L289.00 232.45 L289.85 234.35 L290.70 232.45 L291.55 234.35 L292.40 232.45 L293.25 234.35 L294.10 232.45 L294.95 234.35 L295.80 232.45 L296.65 234.35 L297.50 232.45 L298.35 234.35 L299.20 232.45 L300.05 234.35 L300.90 232.45 L301.75 234.35 L302.60 232.45 L303.45 234.35 L304.30 232.45 L305.15 234.35 L306.00 232.45 L306.85 234.35 L307.70 232.45 L308.55 234.35 L309.40 232.45 L310.25 234.35 L311.10 232.45 L311.95 234.35 L312.80 232.45 L313.65 234.35 L314.50 232.45 L315.35 234.35 L316.20 232.45 L317.05 234.35 L317.90 232.45 L318.75 234.35 L319.60 232.45 L320.45 234.35 L321.30 232.45 L322.15 234.35 L323.00 232.45 L323.85 234.35 L324.70 232.45 L325.55 234.35 L326.40 232.45 L327.25 234.35 L328.10 232.45 L328.95 234.35 L329.80 232.45 L330.65 234.35 L331.50 232.45 L332.35 234.35 L333.20 232.45 L334.05 234.35 L334.90 232.45 L335.75 234.35 L336.60 232.45 L337.45 234.35 L338.30 232.45 L339.15 234.35 L340.00 232.45 L340.85 234.35 L341.70 232.45 L342.55 234.35 L343.40 232.45 L344.25 234.35 L345.10 232.45 L345.95 234.35 L346.80 232.45 L347.65 234.35 L348.50 232.45 L348.60 234.35 M382.8 233.4 L383.65 234.35 L384.50 232.45 L385.35 234.35 L386.20 232.45 L387.05 234.35 L387.90 232.45 L388.75 234.35 L389.60 232.45 L390.45 234.35 L391.30 232.45 L392.15 234.35 L393.00 232.45 L393.85 234.35 L394.70 232.45 L395.55 234.35 L396.40 232.45 L397.25 234.35 L398.10 232.45 L398.95 234.35 L399.80 232.45 L400.65 234.35 L401.50 232.45 L402.35 234.35 L403.20 232.45 L404.05 234.35 L404.90 232.45 L405.75 234.35 L406.60 232.45 L407.45 234.35 L408.30 232.45 L409.15 234.35 L410.00 232.45 L410.85 234.35 L411.70 232.45 L412.55 234.35 L413.40 232.45 L414.25 234.35 L415.10 232.45 L415.95 234.35 L416.80 232.45 L417.65 234.35 L418.50 232.45 L419.35 234.35 L420.20 232.45 L421.05 234.35 L421.90 232.45 L422.75 234.35 L423.60 232.45 L424.45 234.35 L425.30 232.45 L426.15 234.35 L427.00 232.45 L427.85 234.35 L428.70 232.45 L429.55 234.35 L430.40 232.45 L431.25 234.35 L432.10 232.45 L432.95 234.35 L433.80 232.45 L434.65 234.35 L435.50 232.45 L436.35 234.35 L437.20 232.45 L438.05 234.35 L438.90 232.45 L439.75 234.35 L440.60 232.45 L441.45 234.35 L442.30 232.45 L443.15 234.35 L444.00 232.45 L444.85 234.35 L445.70 232.45 L446.55 234.35 L447.40 232.45 L448.25 234.35 L449.10 232.45 L449.40 234.35" stroke="#d3def5" stroke-width="0.6" fill="none"/>
<rect x="348.6" y="228.2" width="34.2" height="9.6" fill="#2d53a2"/>
<rect x="352.2" y="229.6" width="27" height="4.4" fill="#3f68b8"/>
<rect x="348.6" y="228.2" width="3" height="9.6" fill="#4a6db4"/><rect x="379.8" y="228.2" width="3" height="9.6" fill="#4a6db4"/>
<rect x="348.7" y="228.1" width="2.2" height="2.2" fill="#b7c6e6"/>
<rect x="380.5" y="228.1" width="2.2" height="2.2" fill="#b7c6e6"/>
<rect x="348.7" y="235.70000000000002" width="2.2" height="2.2" fill="#b7c6e6"/>
<rect x="380.5" y="235.70000000000002" width="2.2" height="2.2" fill="#b7c6e6"/>
<circle cx="365.8" cy="229.4" r="1.3" fill="#1f449a" stroke="#c9d6f0" stroke-width="0.55"/>
<circle cx="365.8" cy="236.2" r="1.3" fill="#1f449a" stroke="#c9d6f0" stroke-width="0.55"/>
<circle cx="350.2" cy="233.4" r="1.3" fill="#1f449a" stroke="#c9d6f0" stroke-width="0.55"/>
<circle cx="381.4" cy="233.4" r="1.3" fill="#1f449a" stroke="#c9d6f0" stroke-width="0.55"/>
<rect x="356.6" y="234.8" width="17.8" height="2" rx="1" fill="#2d53a2" stroke="#c9d6f0" stroke-width="0.5"/>
<text x="352.6" y="233.4" font-size="4.2" fill="#86a3e0" textLength="26.4" lengthAdjust="spacingAndGlyphs">Hello World!</text>
</svg>
<svg width="624" height="472"><rect x="480.30" y="11.00" width="0.70" height="449.00" fill="#323537"/></svg>
<svg width="624" height="472"><rect x="620.80" y="11.00" width="0.70" height="449.00" fill="#323537"/></svg>
<svg width="624" height="472"><rect x="481.00" y="22.20" width="140.00" height="0.50" fill="#37393b"/></svg>
<svg width="624" height="472"><rect x="481.00" y="33.60" width="140.00" height="0.60" fill="#323537"/></svg>
<div class="t" style="transform:translate(483.00px,13.00px) rotate(0.05deg) scaleX(0.8422);font-size:5.99px;line-height:8px;color:#b6b8ba;">Properties</div>
<div class="t" style="transform:translate(483.00px,36.30px) rotate(0.05deg) scaleX(1.0000);font-size:5.67px;line-height:8px;color:#d4d6d7;font-weight:bold;">ID</div>
<svg width="624" height="472"><rect x="539.60" y="35.40" width="77.40" height="9.10" fill="#45494a" rx="0.8" stroke="#5f6365" stroke-width="0.6"/></svg>
<svg width="624" height="472" viewBox="0 0 624 472">
<rect x="536" y="48.8" width="41" height="2.2" fill="#585b5d"/><rect x="536" y="51" width="41" height="0.7" fill="#9a9c9e"/>
<rect x="536" y="126.2" width="41" height="0.7" fill="#9a9c9e"/><rect x="536" y="126.9" width="41" height="2.2" fill="#585b5d"/>
<rect x="494.4" y="68" width="2.6" height="41" fill="#505355"/><rect x="497" y="68" width="0.8" height="41" fill="#9a9c9e"/>
<rect x="616.6" y="68" width="0.8" height="41" fill="#9a9c9e"/><rect x="617.4" y="68" width="2.2" height="41" fill="#4a4d4f"/>
<rect x="535.7" y="68.2" width="41.2" height="41" fill="#4b4f51" stroke="#9a9c9e" stroke-width="0.7"/>
<path d="M556.3 51.7 V68.2 M556.3 109.2 V126.2 M497.8 88.8 H535.7 M576.9 88.8 H616.6" stroke="#9a9c9e" stroke-width="0.7" fill="none"/>
<path d="M487.8 53 V124.5" stroke="#9a9c9e" stroke-width="0.8"/>
<circle cx="488.4" cy="88.8" r="4.7" fill="#3c3f41" stroke="#9a9c9e" stroke-width="0.7"/>
<rect x="499" y="134.2" width="114.6" height="2" rx="1" fill="#3c3f41" stroke="#9a9c9e" stroke-width="0.6"/>
<circle cx="556.5" cy="135.2" r="4.7" fill="#3c3f41" stroke="#9a9c9e" stroke-width="0.7"/>
<text x="488.4" y="90.4" font-size="4.5" fill="#d0d2d3" text-anchor="middle">50</text>
<text x="556.5" y="136.8" font-size="4.5" fill="#d0d2d3" text-anchor="middle">50</text>
<path d="M539.8 86.4 l2.1 2.4 l-2.1 2.4 M572.4 86.4 l-2.1 2.4 l2.1 2.4 M553.9 72.4 l2.4 2.1 l2.4 -2.1 M553.9 105.4 l2.4 -2.1 l2.4 2.1 M543.0999999999999 86.4 l2.1 2.4 l-2.1 2.4 M569.1 86.4 l-2.1 2.4 l2.1 2.4 M553.9 75.5 l2.4 2.1 l2.4 -2.1 M553.9 102.30000000000001 l2.4 -2.1 l2.4 2.1 M546.4 86.4 l2.1 2.4 l-2.1 2.4 M565.8 86.4 l-2.1 2.4 l2.1 2.4 M553.9 78.60000000000001 l2.4 2.1 l2.4 -2.1 M553.9 99.2 l2.4 -2.1 l2.4 2.1" stroke="#bcbec0" stroke-width="0.6" fill="none"/>
<text x="560.4" y="62.0" font-size="6.8" fill="#d0d2d3" stroke="#d0d2d3" stroke-width="0.15" text-anchor="middle">0</text>
<text x="560.4" y="120.2" font-size="6.8" fill="#d0d2d3" stroke="#d0d2d3" stroke-width="0.15" text-anchor="middle">0</text>
<text x="509.8" y="95.0" font-size="6.8" fill="#d0d2d3" stroke="#d0d2d3" stroke-width="0.15" text-anchor="middle">0</text>
<text x="589.4" y="95.0" font-size="6.8" fill="#d0d2d3" stroke="#d0d2d3" stroke-width="0.15" text-anchor="middle">0</text>
</svg>
<div class="t" style="transform:translate(482.80px,143.70px) rotate(0.05deg) scaleX(0.9017);font-size:7.06px;line-height:8px;color:#c4c6c7;">layout_width</div>
<svg width="624" height="472"><rect x="537.40" y="142.30" width="80.70" height="10.20" fill="#45494b" rx="1.4" stroke="#5a5e60" stroke-width="0.6"/></svg>
<svg width="624" height="472"><rect x="609.40" y="142.60" width="8.40" height="9.60" fill="#3c3f41" rx="0.8"/></svg>
<svg width="624" height="472"><rect x="609.00" y="142.60" width="0.50" height="9.60" fill="#55595b"/></svg>
<div class="t" style="transform:translate(539.30px,143.40px) rotate(0.05deg) scaleX(0.8837);font-size:6.96px;line-height:8px;color:#4f93e6;">wrap_content</div>
<div class="t" style="transform:translate(482.80px,156.20px) rotate(0.05deg) scaleX(0.8854);font-size:7.06px;line-height:8px;color:#c4c6c7;">layout_height</div>
<svg width="624" height="472"><rect x="537.40" y="154.50" width="80.70" height="10.40" fill="#45494b" rx="1.4" stroke="#5a5e60" stroke-width="0.6"/></svg>
<svg width="624" height="472"><rect x="609.40" y="154.80" width="8.40" height="9.80" fill="#3c3f41" rx="0.8"/></svg>
<svg width="624" height="472"><rect x="609.00" y="154.80" width="0.50" height="9.80" fill="#55595b"/></svg>
<div class="t" style="transform:translate(539.30px,155.70px) rotate(0.05deg) scaleX(0.8837);font-size:6.96px;line-height:8px;color:#4f93e6;">wrap_content</div>
<svg width="624" height="472"><rect x="483.00" y="168.40" width="135.50" height="0.60" fill="#515456"/></svg>
<div class="t" style="transform:translate(482.80px,171.00px) rotate(0.05deg) scaleX(0.9362);font-size:6.85px;line-height:8px;color:#c4c6c7;font-weight:bold;">TextView</div>
<div class="t" style="transform:translate(482.80px,180.80px) rotate(0.05deg) scaleX(0.9313);font-size:7.06px;line-height:8px;color:#c4c6c7;">text</div>
<svg width="624" height="472"><rect x="539.60" y="179.90" width="68.60" height="9.70" fill="#45494b" rx="1.4" stroke="#5a5e60" stroke-width="0.6"/></svg>
<div class="t" style="transform:translate(541.90px,180.75px) rotate(0.05deg) scaleX(0.9192);font-size:6.96px;line-height:8px;color:#4f93e6;">Hello World!</div>
<svg width="624" height="472"><rect x="610.70" y="179.90" width="8.00" height="9.70" fill="#45494b" rx="1.4" stroke="#5a5e60" stroke-width="0.6"/></svg>
<div class="t" style="transform:translate(489.80px,193.00px) rotate(0.05deg) scaleX(0.9488);font-size:7.06px;line-height:8px;color:#c4c6c7;">text</div>
<svg width="624" height="472"><rect x="539.60" y="192.20" width="68.60" height="9.50" fill="#45494b" rx="1.4" stroke="#5a5e60" stroke-width="0.6"/></svg>
<svg width="624" height="472"><rect x="610.70" y="192.20" width="8.00" height="9.50" fill="#45494b" rx="1.4" stroke="#5a5e60" stroke-width="0.6"/></svg>
<div class="t" style="transform:translate(482.80px,205.60px) rotate(0.05deg) scaleX(0.9113);font-size:7.06px;line-height:8px;color:#c4c6c7;">contentDescription</div>
<svg width="624" height="472"><rect x="539.60" y="204.50" width="68.60" height="9.50" fill="#45494b" rx="1.4" stroke="#5a5e60" stroke-width="0.6"/></svg>
<svg width="624" height="472"><rect x="610.70" y="204.50" width="8.00" height="9.50" fill="#45494b" rx="1.4" stroke="#5a5e60" stroke-width="0.6"/></svg>
<div class="t" style="transform:translate(489.20px,217.80px) rotate(0.05deg) scaleX(0.8692);font-size:7.06px;line-height:8px;color:#c4c6c7;">textAppearance</div>
<svg width="624" height="472"><rect x="537.40" y="216.30" width="81.40" height="10.80" fill="#45494b" rx="1.4" stroke="#5a5e60" stroke-width="0.6"/></svg>
<svg width="624" height="472"><rect x="610.10" y="216.60" width="8.40" height="10.20" fill="#3c3f41" rx="0.8"/></svg>
<svg width="624" height="472"><rect x="609.70" y="216.60" width="0.50" height="10.20" fill="#55595b"/></svg>
<div class="t" style="transform:translate(539.50px,217.70px) rotate(0.05deg) scaleX(0.8806);font-size:6.96px;line-height:8px;color:#4f93e6;">Material.Small</div>
<div class="t" style="transform:translate(612.80px,180.60px) rotate(0.05deg) scaleX(1.0000);font-size:4.49px;line-height:8px;color:#8a8c8e;">...</div>
<div class="t" style="transform:translate(612.80px,193.00px) rotate(0.05deg) scaleX(1.0000);font-size:4.49px;line-height:8px;color:#8a8c8e;">...</div>
<div class="t" style="transform:translate(612.80px,205.40px) rotate(0.05deg) scaleX(1.0000);font-size:4.49px;line-height:8px;color:#8a8c8e;">...</div>
<svg width="624" height="472" viewBox="0 0 624 472">
<path d="M611.9 146.5 h3.8 l-1.9 2.6z" fill="#e0e2e3"/>
<path d="M611.9 158.8 h3.8 l-1.9 2.6z" fill="#e0e2e3"/>
<path d="M611.9 220.8 h3.8 l-1.9 2.6z" fill="#e0e2e3"/>
<path d="M483.6 219.9 v4 l3.2 -2z" fill="#bfc1c3"/>
<path d="M483.0 199.2 l2.4 -2.4 a1.5 1.5 0 1 1 0.9 0.9 l-2.4 2.4z" fill="#0c0c0c"/>
</svg>
<svg width="624" height="472"><rect x="621.50" y="0.00" width="2.50" height="472.00" fill="#3c3f41"/></svg>
<svg width="624" height="472"><rect x="622.50" y="4.00" width="1.50" height="2.00" fill="#4a88c7"/></svg>
<svg width="624" height="472"><rect x="622.50" y="36.00" width="1.50" height="3.00" fill="#6a9a3a"/></svg>
<svg width="624" height="472"><rect x="0.00" y="459.60" width="624.00" height="12.40" fill="#3c3f41"/></svg>
<svg width="624" height="472"><rect x="0.00" y="460.00" width="624.00" height="0.90" fill="#54575a"/></svg>
<svg width="624" height="472"><rect x="28.00" y="460.90" width="20.60" height="11.10" fill="#4e5254"/></svg>
<svg width="624" height="472"><rect x="3.80" y="461.00" width="0.60" height="11.00" fill="#4a4d4f"/></svg>
<svg width="624" height="472"><rect x="0.40" y="11.00" width="0.70" height="449.00" fill="#4a4d4f"/></svg>
<div class="t" style="transform:translate(11.40px,462.00px) rotate(0.05deg) scaleX(0.9164);font-size:6.10px;line-height:8px;color:#c4c6c7;">Text</div>
<div class="t" style="transform:translate(31.60px,462.00px) rotate(0.05deg) scaleX(0.8217);font-size:6.10px;line-height:8px;color:#c4c6c7;">Design</div>
</div></body></html>
